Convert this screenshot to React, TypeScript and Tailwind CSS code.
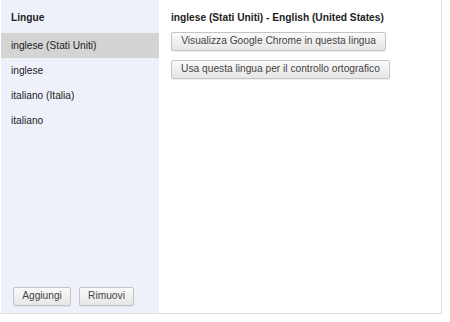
const languages = [
  "inglese (Stati Uniti)",
  "inglese",
  "italiano (Italia)",
  "italiano",
];

const btn =
  "h-[19px] px-0 whitespace-nowrap rounded-[2px] border border-[#c4c4c4] bg-gradient-to-b from-[#fafafa] to-[#e6e6e6] text-[10.2px] text-[#444] leading-none shadow-[0_1px_0_rgba(0,0,0,0.06)]";

export default function App() {
  const selected = 0;
  return (
    <div className="w-[450px] h-[322px] bg-white font-['Liberation_Sans',Arial,sans-serif] text-[#222]">
      <div className="flex w-[442px] h-[314px] border-r border-b border-[#dcdcdc]">
        {/* left list */}
        <div className="w-[158px] ml-[1px] flex flex-col bg-[#eef1fa]">
          <div className="h-[33px] pl-[10px] pt-[10px] text-[10.2px] font-bold">
            Lingue
          </div>
          {languages.map((lang, i) => (
            <div
              key={lang}
              className={
                "h-[25px] pl-[10px] flex items-center text-[10.2px] " +
                (i === selected ? "bg-[#d4d4d4]" : "")
              }
            >
              {lang}
            </div>
          ))}
          <div className="mt-auto flex gap-[8px] pl-[12px] pb-[7px]">
            <button className={btn + " w-[58px]"}>Aggiungi</button>
            <button className={btn + " w-[55px]"}>Rimuovi</button>
          </div>
        </div>

        {/* right details */}
        <div className="flex-1 pl-[12px] pt-[10px] flex flex-col items-start">
          <div className="text-[10.2px] font-bold h-[22px] whitespace-nowrap">
            inglese (Stati Uniti) - English (United States)
          </div>
          <button className={btn + " w-[215px]"}>
            Visualizza Google Chrome in questa lingua
          </button>
          <button className={btn + " w-[219px] mt-[9px]"}>
            Usa questa lingua per il controllo ortografico
          </button>
        </div>
      </div>
    </div>
  );
}
